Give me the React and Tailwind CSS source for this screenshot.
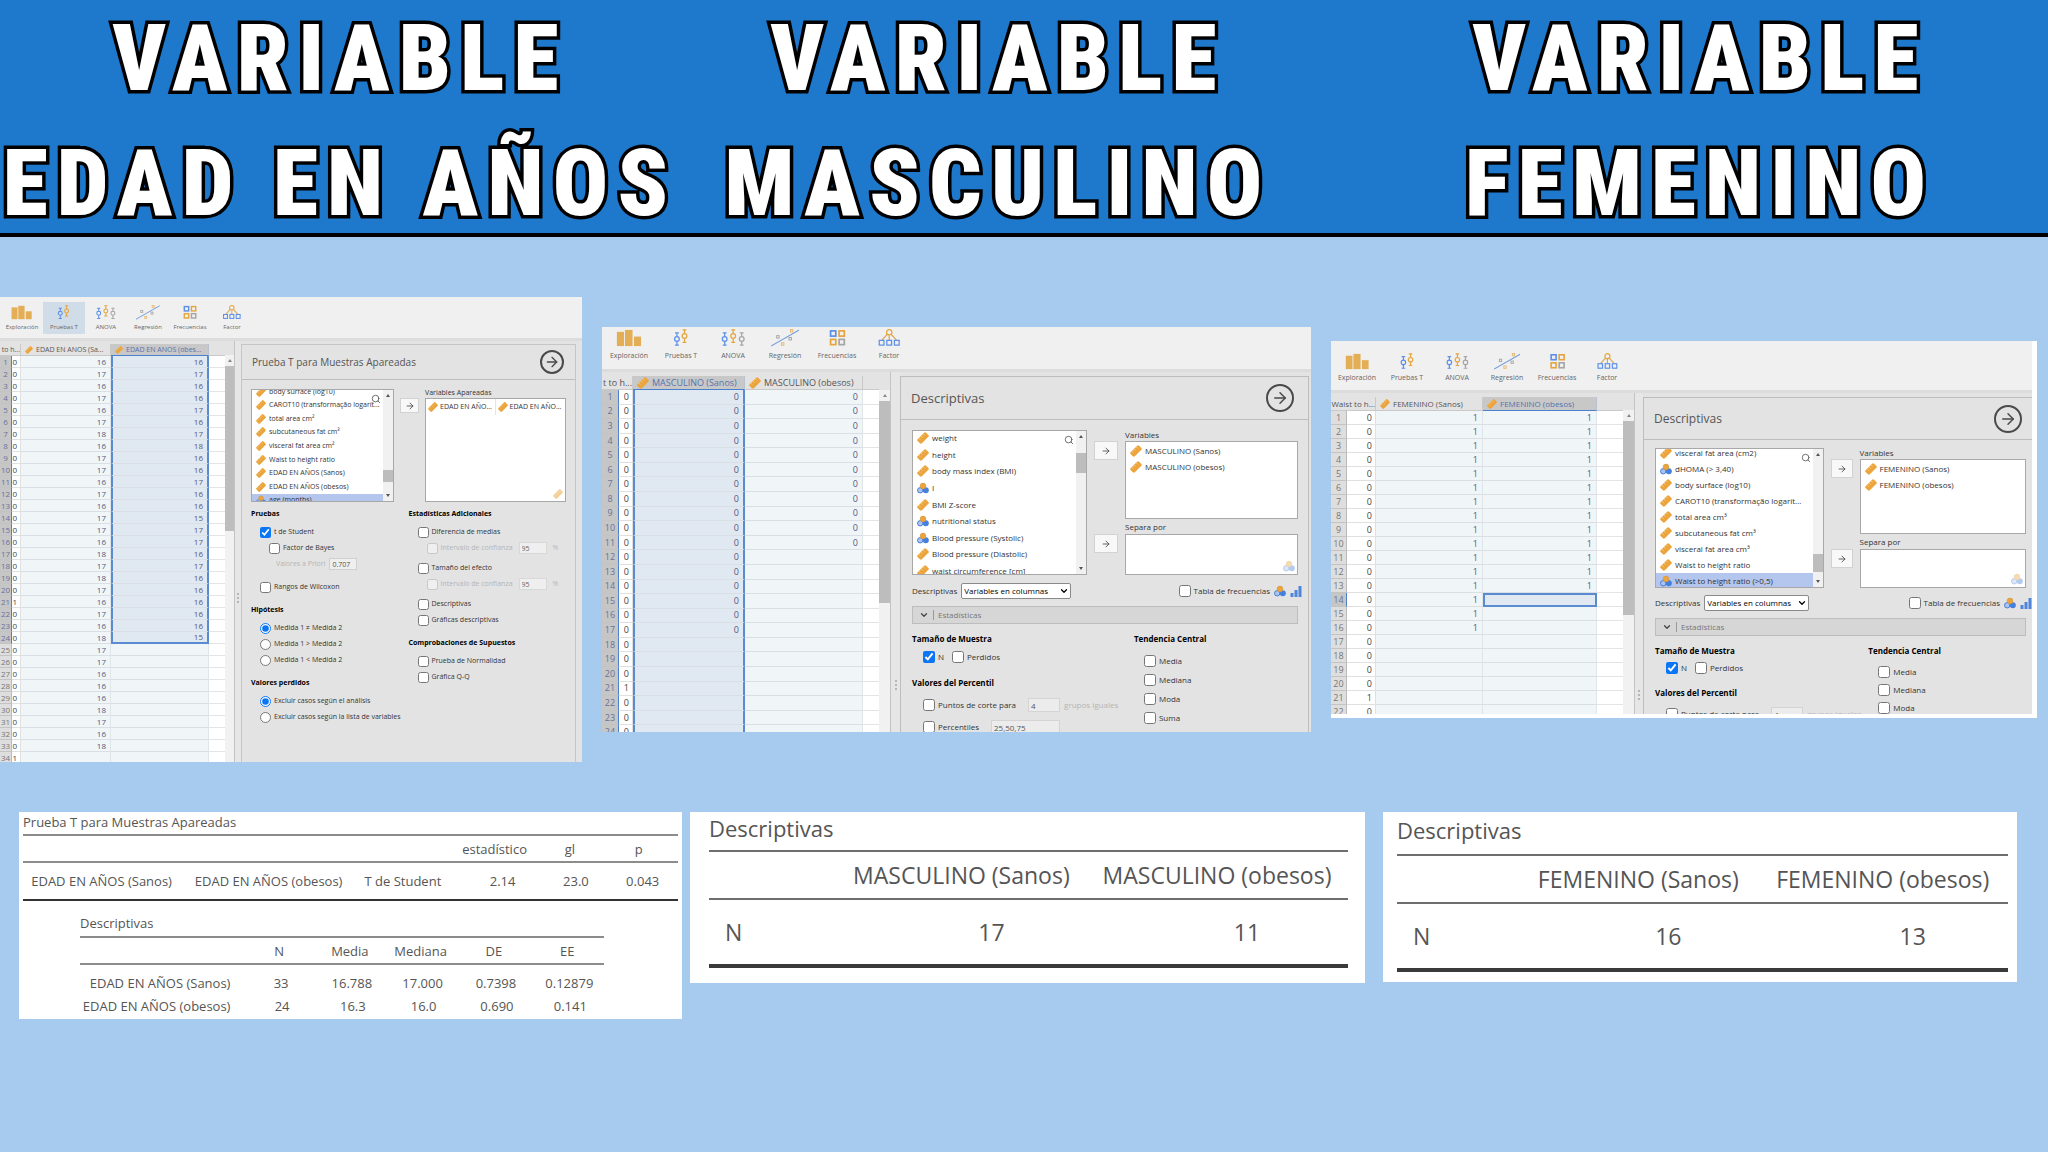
import clsx from 'clsx'
import { ArrowRight, ChevronDown, Search } from 'lucide-react'

/* ---------- icons ---------- */

function RulerIcon({ className }) {
  return (
    <svg viewBox="0 0 12 12" className={clsx('shrink-0', className)}>
      <g transform="rotate(-45 6 6)">
        <rect x="0" y="3" width="12" height="6" rx="1.4" fill="#eba53c" />
        <path d="M3 3v2.4M6 3v2.4M9 3v2.4" stroke="#f9d79b" strokeWidth="0.7" />
      </g>
    </svg>
  )
}

function NominalIcon({ className }) {
  return (
    <svg viewBox="0 0 12 12" className={clsx('shrink-0', className)}>
      <circle cx="3.2" cy="8.3" r="2.7" fill="#a9c4f0" stroke="#3f74d2" strokeWidth="0.9" />
      <circle cx="8.8" cy="8.3" r="3" fill="#4580dd" />
      <circle cx="6" cy="4" r="2.9" fill="#eba53c" stroke="#c98e3b" strokeWidth="0.5" />
    </svg>
  )
}

function OrdinalIcon({ className }) {
  return (
    <svg viewBox="0 0 12 12" className={clsx('shrink-0', className)}>
      <path d="M0.5 8h3v4h-3zM4.5 5h3v7h-3zM8.5 1h3v11h-3z" fill="#4f86dc" />
    </svg>
  )
}

const TOOL_ICONS = {
  exploration: (
    <g fill="#e3ae55">
      <rect x="2" y="3" width="7.5" height="15" />
      <rect x="10.5" y="1" width="8" height="17" />
      <rect x="20" y="8" width="7.5" height="10" />
    </g>
  ),
  ttest: (
    <g fill="none" strokeWidth="1.3">
      <path d="M8.5 4h4M10.5 4v4M8.5 17h4M10.5 17v-4" stroke="#5b8fe8" />
      <circle cx="10.5" cy="10.5" r="2.5" stroke="#5b8fe8" />
      <path d="M16.5 1h4M18.5 1v4M16.5 14h4M18.5 14v-4" stroke="#e5a53e" />
      <circle cx="18.5" cy="7.5" r="2.5" stroke="#e5a53e" />
    </g>
  ),
  anova: (
    <g fill="none" strokeWidth="1.3">
      <path d="M4 4h4M6 4v4M4 17h4M6 17v-4" stroke="#5b8fe8" />
      <circle cx="6" cy="10.5" r="2.5" stroke="#5b8fe8" />
      <path d="M13 1h4M15 1v4M13 14h4M15 14v-4" stroke="#e5a53e" />
      <circle cx="15" cy="7.5" r="2.5" stroke="#e5a53e" />
      <path d="M22 4h4M24 4v4M22 17h4M24 17v-4" stroke="#a5a5a5" />
      <circle cx="24" cy="10.5" r="2.5" stroke="#a5a5a5" />
    </g>
  ),
  regression: (
    <g fill="none" strokeWidth="1">
      <path d="M0 18L30 1" stroke="#6f9bdc" strokeWidth="1.2" />
      <rect x="6" y="7" width="2.6" height="2.6" stroke="#a5a5a5" />
      <rect x="20.5" y="0.6" width="2.6" height="2.6" stroke="#e5b76a" />
      <rect x="19" y="9" width="2.6" height="2.6" stroke="#a5a5a5" />
      <rect x="11" y="14.5" width="2.6" height="2.6" stroke="#e5b76a" />
    </g>
  ),
  frequencies: (
    <g fill="none" strokeWidth="1.8">
      <rect x="8" y="2" width="5.5" height="5.5" stroke="#5b8fe8" />
      <rect x="17" y="2" width="5.5" height="5.5" stroke="#e5a53e" />
      <rect x="8" y="11" width="5.5" height="5.5" stroke="#e5a53e" />
      <rect x="17" y="11" width="5.5" height="5.5" stroke="#a5a5a5" />
    </g>
  ),
  factor: (
    <g fill="none" strokeWidth="1.3">
      <path d="M13 5.500L7.500 11.500M15 6.500v5M17 5.500l5.500 6" stroke="#d9a95a" />
      <circle cx="15" cy="3.500" r="2.800" stroke="#e5a53e" />
      <rect x="4.500" y="12" width="5" height="5" stroke="#5b8fe8" />
      <rect x="12.500" y="12" width="5" height="5" stroke="#5b8fe8" />
      <rect x="20.500" y="12" width="5" height="5" stroke="#5b8fe8" />
    </g>
  ),
}

const TOOLS = [
  ['exploration', 'Exploración'],
  ['ttest', 'Pruebas T'],
  ['anova', 'ANOVA'],
  ['regression', 'Regresión'],
  ['frequencies', 'Frecuencias'],
  ['factor', 'Factor'],
]

/* ---------- data ---------- */

const AGE_SANOS = '16 17 16 17 16 17 18 16 17 17 16 17 16 17 17 16 18 17 18 17 16 17 16 18 17 17 16 16 16 18 17 16 18'.split(' ')
const AGE_OBESOS = '16 17 16 16 17 16 17 18 16 16 17 16 16 15 17 17 16 17 16 16 16 16 16 15'.split(' ')

const AGE_LIST = [
  ['scale', 'body surface (log10)'],
  ['scale', 'CAROT10 (transformação logarít...'],
  ['scale', 'total area cm²'],
  ['scale', 'subcutaneous fat cm³'],
  ['scale', 'visceral fat area cm²'],
  ['scale', 'Waist to height ratio'],
  ['scale', 'EDAD EN AÑOS (Sanos)'],
  ['scale', 'EDAD EN AÑOS (obesos)'],
  ['nominal', 'age (months)', true],
]

const MALE_LIST = [
  ['scale', 'weight'],
  ['scale', 'height'],
  ['scale', 'body mass index (BMI)'],
  ['nominal', 'I'],
  ['scale', 'BMI Z-score'],
  ['nominal', 'nutritional status'],
  ['nominal', 'Blood pressure (Systolic)'],
  ['scale', 'Blood pressure (Diastolic)'],
  ['scale', 'waist circumference [cm]'],
]

const FEMALE_LIST = [
  ['scale', 'visceral fat area (cm2)'],
  ['nominal', 'dHOMA (> 3,40)'],
  ['scale', 'body surface (log10)'],
  ['scale', 'CAROT10 (transformação logarít...'],
  ['scale', 'total area cm³'],
  ['scale', 'subcutaneous fat cm³'],
  ['scale', 'visceral fat area cm³'],
  ['scale', 'Waist to height ratio'],
  ['nominal', 'Waist to height ratio (>0,5)', true],
]

/* ---------- shared pieces ---------- */

function Toolbar({ active, className, itemClass, iconClass }) {
  return (
    <nav className={clsx('flex border-b-3 border-[#dcdcdc] bg-[#f0f0f0]', className)}>
      {TOOLS.map(([key, label]) => (
        <button
          key={key}
          className={clsx(
            'flex shrink-0 flex-col items-center text-[#666]',
            itemClass,
            active === key && 'bg-[#d0dce7]'
          )}
        >
          <svg viewBox="0 0 30 19" className={iconClass}>{TOOL_ICONS[key]}</svg>
          <span className="whitespace-nowrap">{label}</span>
        </button>
      ))}
    </nav>
  )
}

function ScrollTrack({ className, thumbClass }) {
  return (
    <div className={clsx('flex shrink-0 flex-col items-center bg-[#f1f1f1]', className)}>
      <span className="my-1 border-x-2 border-b-3 border-x-transparent border-b-[#888]" />
      <div className={clsx('w-full bg-[#bdbdbd]', thumbClass)} />
    </div>
  )
}

function Splitter({ className }) {
  return (
    <div className={clsx('flex shrink-0 flex-col items-center border-l border-[#c4c4c4] bg-[#e6e6e6]', className)}>
      <i className="mb-0.5 size-0.5 bg-[#b5b5b5]" />
      <i className="mb-0.5 size-0.5 bg-[#b5b5b5]" />
      <i className="size-0.5 bg-[#b5b5b5]" />
    </div>
  )
}

function Sheet({ cols, rows, corner, columns, rowClass, headClass, bodyClass, iconClass, tableClass, activeRows }) {
  return (
    <table className={clsx('w-full table-fixed border-separate border-spacing-0', tableClass)}>
      <colgroup>
        {cols.map((c, i) => <col key={i} className={c} />)}
      </colgroup>
      <thead>
        <tr className={headClass}>
          <th colSpan={2} className="border-r border-b border-[#c9c9c9] p-0 font-normal text-[#555]">
            <div className="flex justify-end overflow-hidden whitespace-nowrap">{corner}</div>
          </th>
          {columns.map((col) => (
            <th
              key={col.name}
              className={clsx(
                'border-r border-b p-0 pl-1 font-normal',
                col.selected ? 'border-[#b9c3d0] border-b-[#4a80cc] bg-[#c8c8c8] text-[#5573ad]' : 'border-[#c9c9c9] text-[#555]'
              )}
            >
              <div className="flex items-center gap-[3px] overflow-hidden whitespace-nowrap">
                <RulerIcon className={iconClass} />
                <span>{col.name}</span>
              </div>
            </th>
          ))}
          <th className="border-b border-[#c9c9c9] p-0" />
        </tr>
      </thead>
      <tbody className={bodyClass}>
        {Array.from({ length: rows }, (_, r) => (
          <tr key={r} className={rowClass}>
            <th
              className={clsx(
                'border-r border-b border-b-[#c3c3c3] p-0 text-center font-normal',
                r >= activeRows[0] && r < activeRows[1]
                  ? 'border-r-[#4a80cc] bg-[#c6c6c6] text-[#66739c]'
                  : 'border-r-[#bbb] bg-[#dedede] text-[#777]'
              )}
            >
              {r + 1}
            </th>
            <td className="border-r border-b border-[#e0e0e0] bg-white p-0 pr-[3px] text-right text-[#444]">
              {r === 20 || r === 33 ? 1 : 0}
            </td>
            {columns.map((col) => {
              const [from, to] = col.range || [0, 0]
              const inside = r >= from && r < to
              return (
                <td
                  key={col.name}
                  className={clsx(
                    'p-0 pr-1 text-right text-[#555a80]',
                    inside
                      ? 'border-x-2 border-x-[#5a8ad0] bg-[#e0e8f2]'
                      : 'border-r border-r-[#dfe5e8] bg-[#f0f5f7]',
                    inside && r === to - 1 ? 'border-b-2 border-b-[#5a8ad0]' : 'border-b border-b-[#d9dfe4]',
                    inside && to - from === 1 && 'border-t-2 border-t-[#5a8ad0]'
                  )}
                >
                  {col.values[r]}
                </td>
              )
            })}
            <td className="border-b border-[#e4e4e4] bg-white p-0" />
          </tr>
        ))}
      </tbody>
    </table>
  )
}

function PanelTitle({ title, className, buttonClass, arrowClass }) {
  return (
    <div className={clsx('flex items-center justify-between border-b border-[#bdbdbd] pl-2.5 text-[#555]', className)}>
      <h2>{title}</h2>
      <button
        aria-label="Ocultar opciones"
        className={clsx('flex items-center justify-center rounded-full border-2 border-[#4a4a4a] text-[#4a4a4a]', buttonClass)}
      >
        <ArrowRight className={arrowClass} strokeWidth={2} />
      </button>
    </div>
  )
}

function VarIcon({ type, className }) {
  return type === 'nominal' ? <NominalIcon className={className} /> : <RulerIcon className={className} />
}

function VariableList({ items, className, listClass, iconClass, thumbClass }) {
  return (
    <div className={clsx('relative flex min-w-0 flex-1 overflow-hidden border border-[#a8a8a8] bg-white', className)}>
      <ul className={clsx('flex min-w-0 flex-1 flex-col', listClass)}>
        {items.map(([type, name, selected]) => (
          <li
            key={name}
            className={clsx('flex min-h-0 flex-1 items-center gap-[3px] pl-1 whitespace-nowrap', selected && 'bg-[#b4c5ee]')}
          >
            <VarIcon type={type} className={iconClass} />
            {name}
          </li>
        ))}
      </ul>
      <button aria-label="Buscar" className="absolute top-1 right-3 text-[#555]">
        <Search className="size-2.5" />
      </button>
      <div className="flex w-2.5 shrink-0 flex-col items-center justify-between bg-[#f1f1f1]">
        <span className="mt-1 border-x-2 border-b-3 border-x-transparent border-b-[#555]" />
        <div className={clsx('w-full bg-[#bdbdbd]', thumbClass)} />
        <span className="mb-1 border-x-2 border-t-3 border-x-transparent border-t-[#555]" />
      </div>
    </div>
  )
}

function MoveButton({ className }) {
  return (
    <button
      aria-label="Asignar variable"
      className={clsx('flex items-center justify-center border border-[#d2d2d2] bg-[#f8f8f8] text-[#444]', className)}
    >
      <ArrowRight className="size-2.5" />
    </button>
  )
}

function Choice({ type = 'checkbox', name, label, checked, disabled, boxClass, className, children }) {
  return (
    <div className={clsx('flex items-center', className)}>
      <label className={clsx('flex items-center gap-[3px] whitespace-nowrap', disabled && 'text-[#b5b5b5]')}>
        <input
          type={type}
          name={name}
          defaultChecked={checked}
          disabled={disabled}
          className={clsx('m-0 shrink-0 accent-[#0b75f3]', boxClass)}
        />
        {label}
      </label>
      {children}
    </div>
  )
}

/* ---------- paired t test window ---------- */

function PairedTestWindow() {
  const box = 'size-[11px]'
  const row = 'h-4 pl-[9px]'
  const nested = 'h-4 pl-[18px]'
  const heading = 'h-[18px] leading-[16px] font-bold text-black'
  return (
    <section className="h-[465px] overflow-hidden bg-[#e3e3e3]">
      <Toolbar active="ttest" className="h-[44px] pt-[5px] pl-px text-[6px] leading-[8px]" itemClass="h-8 w-[42px] pt-[3px] gap-[3px]" iconClass="h-[15px]" />
      <div className="flex">
        <div className="flex w-[241px] shrink-0">
          <div className="flex-1 pt-[3px] text-[7px] leading-[8px]">
            <Sheet
              cols={['w-[12px]', 'w-[9px]', 'w-[90px]', 'w-[98px]', 'w-[16px]']}
              rows={34}
              corner="to h..."
              headClass="h-3"
              bodyClass="text-[8px]"
              rowClass="h-3"
              iconClass="size-2"
              activeRows={[0, 24]}
              columns={[
                { name: 'EDAD EN AÑOS (Sa...', values: AGE_SANOS },
                { name: 'EDAD EN AÑOS (obes...', values: AGE_OBESOS, selected: true, range: [0, 24] },
              ]}
            />
          </div>
          <ScrollTrack className="mt-[14px] w-[9px]" thumbClass="h-[165px]" />
          <Splitter className="w-[7px] pt-[252px]" />
        </div>

        <div className="mt-[3px] mr-[6px] min-w-0 flex-1 border border-[#c6c6c6] text-[7px] leading-[10px] text-[#333]">
          <PanelTitle title="Prueba T para Muestras Apareadas" className="h-[35px] pr-[11px] text-[10px]" buttonClass="size-6" arrowClass="size-4" />
          <div className="pt-[9px] pr-[9px] pl-[9px]">
            <div className="flex gap-1.5">
              <VariableList items={AGE_LIST} className="h-[113px]" listClass="-mt-[5px] h-[122px]" iconClass="size-2.5" thumbClass="mt-[60px] h-3" />
              <div className="pt-[9px]">
                <MoveButton className="h-[15px] w-[19px]" />
              </div>
              <div className="flex min-w-0 flex-1 flex-col">
                <h3 className="h-[9px] leading-[8px]">Variables Apareadas</h3>
                <div className="flex flex-1 flex-col justify-between border border-[#a8a8a8] bg-white">
                  <div className="grid grid-cols-2 whitespace-nowrap">
                    <span className="flex h-4 items-center gap-0.5 overflow-hidden border-r border-[#e4e4e4] pl-0.5">
                      <RulerIcon className="size-2.5" />EDAD EN AÑO...
                    </span>
                    <span className="flex h-4 items-center gap-0.5 overflow-hidden pl-0.5">
                      <RulerIcon className="size-2.5" />EDAD EN AÑO...
                    </span>
                  </div>
                  <RulerIcon className="m-0.5 size-2.5 self-end opacity-50" />
                </div>
              </div>
            </div>

            <div className="grid grid-cols-2 pt-1">
              <div>
                <h3 className={heading}>Pruebas</h3>
                <Choice className={row} boxClass={box} label="t de Student" checked />
                <Choice className={nested} boxClass={box} label="Factor de Bayes" />
                <label className="flex h-4 items-center gap-1 pl-[25px] text-[#b5b5b5]">
                  Valores a Priori
                  <input defaultValue="0.707" className="h-3 w-7 border border-[#d0d0d0] bg-[#efefef] px-0.5 text-[#555]" />
                </label>
                <Choice className="mt-[7px] h-4 pl-[9px]" boxClass={box} label="Rangos de Wilcoxon" />
                <h3 className={clsx('mt-[7px]', heading)}>Hipótesis</h3>
                <Choice type="radio" name="hyp" className={row} boxClass={box} label="Medida 1 ≠ Medida 2" checked />
                <Choice type="radio" name="hyp" className={row} boxClass={box} label="Medida 1 > Medida 2" />
                <Choice type="radio" name="hyp" className={row} boxClass={box} label="Medida 1 < Medida 2" />
                <h3 className={clsx('mt-[7px]', heading)}>Valores perdidos</h3>
                <Choice type="radio" name="miss" className={row} boxClass={box} label="Excluir casos según el análisis" checked />
                <Choice type="radio" name="miss" className={row} boxClass={box} label="Excluir casos según la lista de variables" />
              </div>
              <div>
                <h3 className={heading}>Estadísticas Adicionales</h3>
                {['Diferencia de medias', 'Tamaño del efecto'].map((label) => (
                  <div key={label} className="mb-1">
                    <Choice className={row} boxClass={box} label={label} />
                    <Choice className={clsx('gap-1.5 text-[#b5b5b5]', nested)} boxClass={box} label="Intervalo de confianza" disabled>
                      <input aria-label={`Confianza, ${label}`} defaultValue="95" className="h-3 w-7 border border-[#d8d8d8] bg-[#efefef] px-0.5 text-[#666]" />
                      %
                    </Choice>
                  </div>
                ))}
                <Choice className={row} boxClass={box} label="Descriptivas" />
                <Choice className={row} boxClass={box} label="Gráficas descriptivas" />
                <h3 className={clsx('mt-[7px]', heading)}>Comprobaciones de Supuestos</h3>
                <Choice className={row} boxClass={box} label="Prueba de Normalidad" />
                <Choice className={row} boxClass={box} label="Gráfica Q-Q" />
              </div>
            </div>
          </div>
        </div>
      </div>
    </section>
  )
}

/* ---------- descriptives options, shared by two windows ---------- */

function DescriptivesOptions({ items, listProps, variables, s }) {
  return (
    <div className={clsx('min-w-0 flex-1 border-t border-l border-[#bdbdbd] text-[8px] leading-[10px] text-[#333]', s.panel)}>
      <PanelTitle title="Descriptivas" className={s.title} buttonClass={s.round} arrowClass="size-[18px]" />
      <div className={clsx('pl-[11px]', s.body)}>
        <div className="flex gap-[7px]">
          <VariableList items={items} {...listProps} />
          <div className="flex flex-col pt-[11px]">
            <MoveButton className={s.move} />
            <MoveButton className={clsx(s.move, s.moveGap)} />
          </div>
          <div className="flex min-w-0 flex-1 flex-col">
            <h3 className="h-[11px] leading-[9px]">Variables</h3>
            <ul className={clsx('border border-[#a8a8a8] bg-white pt-px', s.target)}>
              {variables.map((name) => (
                <li key={name} className="flex h-4 items-center gap-[3px] pl-1 whitespace-nowrap">
                  <RulerIcon className="size-3" />
                  {name}
                </li>
              ))}
            </ul>
            <h3 className="h-[15px] leading-[16px]">Separa por</h3>
            <div className="flex flex-1 items-end justify-end border border-[#a8a8a8] bg-white p-0.5">
              <NominalIcon className="size-3 opacity-40" />
            </div>
          </div>
        </div>

        <div className={clsx('flex items-center justify-between', s.selectRow)}>
          <label className="flex items-center gap-1">
            Descriptivas
            <span className="relative flex items-center">
              <select className={clsx('h-4 appearance-none rounded-xs border border-[#8a8a8a] bg-white pl-0.5 text-black', s.select)}>
                <option>Variables en columnas</option>
              </select>
              <ChevronDown className="pointer-events-none absolute right-0.5 size-2.5 text-black" strokeWidth={3} />
            </span>
          </label>
          <Choice className="gap-1" boxClass="size-3" label="Tabla de frecuencias">
            <NominalIcon className="size-3" />
            <OrdinalIcon className="size-3" />
          </Choice>
        </div>

        <button className="flex h-[18px] w-full items-center gap-1 border border-[#bdbdbd] bg-[#d6d6d6] pl-1.5 text-[#777]">
          <ChevronDown className="size-2.5 text-[#444]" strokeWidth={3} />
          <span className="border-l border-[#999] pl-1">Estadísticas</span>
        </button>
        <div className="grid grid-cols-[23fr_17fr] pt-[7px]">
          <div>
            <h3 className="h-4 leading-[16px] font-bold text-black">Tamaño de Muestra</h3>
            <div className={clsx('flex items-center gap-2 pl-[11px]', s.row)}>
              <Choice boxClass="size-3" label="N" checked />
              <Choice boxClass="size-3" label="Perdidos" />
            </div>
            <h3 className="mt-2 mb-1 h-4 leading-[16px] font-bold text-black">Valores del Percentil</h3>
            <Choice className={clsx('mb-0.5 gap-3 pl-[11px]', s.row)} boxClass="size-3" label="Puntos de corte para">
              <span className="flex items-center gap-1 whitespace-nowrap text-[#b5b5b5]">
                <input aria-label="Número de grupos" defaultValue="4" className="h-3.5 w-8 border border-[#d4d4d4] bg-[#ececec] px-0.5 text-[#555]" />
                grupos iguales
              </span>
            </Choice>
            <Choice className={clsx('gap-3 pl-[11px]', s.row)} boxClass="size-3" label="Percentiles">
              <input aria-label="Lista de percentiles" defaultValue="25,50,75" className="h-3.5 w-[69px] border border-[#d4d4d4] bg-[#ececec] px-0.5 text-[#555]" />
            </Choice>
          </div>
          <div>
            <h3 className="mb-1 h-4 leading-[16px] font-bold text-black">Tendencia Central</h3>
            {['Media', 'Mediana', 'Moda', 'Suma'].map((label) => (
              <Choice key={label} className={clsx('pl-[10px]', s.central)} boxClass="size-3" label={label} />
            ))}
          </div>
        </div>
      </div>
    </div>
  )
}

function MaleWindow() {
  return (
    <section className="h-[405px] overflow-hidden bg-[#e3e3e3]">
      <Toolbar className="h-[45px] pt-[2px] pl-px text-[7px] leading-[10px]" itemClass="w-[52px] gap-[4px]" iconClass="h-[18px]" />
      <div className="flex">
        <div className="flex w-[298px] shrink-0">
          <div className="flex-1 pt-[4px] text-[9px] leading-[10px]">
            <Sheet
              cols={['w-[17px]', 'w-[14px]', 'w-[112px]', 'w-[118px]', 'w-[16px]']}
              rows={24}
              corner="t to h..."
              headClass="h-[14px]"
              rowClass=""
              tableClass="h-[364px]"
              iconClass="size-3"
              activeRows={[0, 24]}
              columns={[
                { name: 'MASCULINO (Sanos)', values: Array(17).fill(0), selected: true, range: [0, 25] },
                { name: 'MASCULINO (obesos)', values: Array(11).fill(0) },
              ]}
            />
          </div>
          <ScrollTrack className="mt-[18px] w-[11px]" thumbClass="h-[202px]" />
          <Splitter className="w-[10px] pt-[308px]" />
        </div>
        <DescriptivesOptions
          items={MALE_LIST}
          variables={['MASCULINO (Sanos)', 'MASCULINO (obesos)']}
          listProps={{ className: 'h-[145px]', listClass: '-mt-px h-[149px]', iconClass: 'size-3', thumbClass: '-mt-[80px] h-5' }}
          s={{
            panel: 'mt-[4px] mr-[2px] border-r',
            title: 'h-[43px] pr-[14px] text-[13px]',
            round: 'size-7',
            body: 'pt-[10px] pr-[10px]',
            move: 'h-[19px] w-6',
            moveGap: 'mt-[74px]',
            target: 'h-[78px]',
            selectRow: 'h-[31px] -mr-1',
            select: 'w-[110px]',
            row: 'h-5',
            central: 'h-[19px]',
          }}
        />
      </div>
    </section>
  )
}

function FemaleWindow() {
  return (
    <section className="h-[377px] overflow-hidden border-r-5 border-b-4 border-white bg-[#e3e3e3]">
      <Toolbar className="h-[52px] pt-[12px] pl-px text-[7px] leading-[10px]" itemClass="w-[50px] gap-[3px]" iconClass="h-[17px]" />
      <div className="flex">
        <div className="flex w-[312px] shrink-0">
          <div className="flex-1 pt-[4px] text-[8px] leading-[10px]">
            <Sheet
              cols={['w-[16px]', 'w-[29px]', 'w-[107px]', 'w-[114px]', 'w-[26px]']}
              rows={22}
              corner="Waist to h..."
              headClass="h-[14px]"
              bodyClass="text-[9px]"
              rowClass="h-[14px]"
              iconClass="size-2.5"
              activeRows={[13, 14]}
              columns={[
                { name: 'FEMENINO (Sanos)', values: Array(16).fill(1) },
                { name: 'FEMENINO (obesos)', values: Array(13).fill(1), selected: true, range: [13, 14] },
              ]}
            />
          </div>
          <ScrollTrack className="mt-[17px] w-[11px]" thumbClass="h-[194px]" />
          <Splitter className="w-[9px] pt-[297px]" />
        </div>
        <DescriptivesOptions
          items={FEMALE_LIST}
          variables={['FEMENINO (Sanos)', 'FEMENINO (obesos)']}
          listProps={{ className: 'h-[140px]', listClass: '-mt-1 h-[144px]', iconClass: 'size-3', thumbClass: 'mt-[90px] h-[18px]' }}
          s={{
            panel: 'mt-[4px]',
            title: 'h-[42px] pr-[10px] text-[12px]',
            round: 'size-7',
            body: 'pt-[8px] pr-[6px]',
            move: 'h-[19px] w-[22px]',
            moveGap: 'mt-[71px]',
            target: 'h-[75px]',
            selectRow: 'h-[30px] -mr-[6px]',
            select: 'w-[105px]',
            row: 'h-[18px]',
            central: 'h-[18px]',
          }}
        />
      </div>
    </section>
  )
}

/* ---------- result tables ---------- */

function PairedResults() {
  return (
    <section className="bg-white pr-1 pb-0.5 pl-1 text-[13px] leading-[16px] text-[#555]">
      <table className="w-full table-fixed border-collapse text-center whitespace-nowrap">
        <caption className="h-[22px] text-left leading-[20px]">Prueba T para Muestras Apareadas</caption>
        <colgroup>
          <col className="w-[24%]" />
          <col className="w-[27%]" />
          <col className="w-[14%]" />
          <col className="w-[14%]" />
          <col className="w-[9%]" />
          <col className="w-[12%]" />
        </colgroup>
        <thead>
          <tr className="h-[27px] border-y-2 border-[#8c8c8c]">
            <td colSpan={3} />
            <th className="p-0 font-normal">estadístico</th>
            <th className="p-0 font-normal">gl</th>
            <th className="p-0 font-normal">p</th>
          </tr>
        </thead>
        <tbody>
          <tr className="h-[38px] border-b-2 border-[#333]">
            <td className="p-0">EDAD EN AÑOS (Sanos)</td>
            <td className="p-0">EDAD EN AÑOS (obesos)</td>
            <td className="p-0">T de Student</td>
            <td className="p-0 pl-4">2.14</td>
            <td className="p-0 pl-3">23.0</td>
            <td className="p-0 pl-2">0.043</td>
          </tr>
        </tbody>
      </table>

      <table className="mt-[12px] ml-[57px] w-[80%] table-fixed border-collapse text-center whitespace-nowrap">
        <caption className="h-[23px] text-left leading-[20px]">Descriptivas</caption>
        <colgroup>
          <col className="w-[31%]" />
          <col className="w-[14%]" />
          <col className="w-[13%]" />
          <col className="w-[14%]" />
          <col className="w-[14%]" />
          <col className="w-[14%]" />
        </colgroup>
        <thead>
          <tr className="h-[27px] border-y-2 border-[#8c8c8c]">
            <td />
            {['N', 'Media', 'Mediana', 'DE', 'EE'].map((h) => (
              <th key={h} className="p-0 font-normal">{h}</th>
            ))}
          </tr>
        </thead>
        <tbody>
          <tr className="h-[30px]">
            <th className="p-0 pt-1.5 pr-3 text-right font-normal">EDAD EN AÑOS (Sanos)</th>
            {['33', '16.788', '17.000', '0.7398', '0.12879'].map((v) => (
              <td key={v} className="p-0 pt-1.5 pl-1">{v}</td>
            ))}
          </tr>
          <tr className="h-[23px]">
            <th className="p-0 pr-3 text-right font-normal">EDAD EN AÑOS (obesos)</th>
            {['24', '16.3', '16.0', '0.690', '0.141'].map((v) => (
              <td key={v} className="p-0 pl-1.5">{v}</td>
            ))}
          </tr>
        </tbody>
      </table>
    </section>
  )
}

function CountResults({ group, values, className, captionClass }) {
  return (
    <section className={clsx('bg-white text-[23px] leading-[24px] text-[#555]', className)}>
      <table className="w-full table-fixed border-collapse text-center whitespace-nowrap">
        <caption className={clsx('text-left text-[22px]', captionClass)}>Descriptivas</caption>
        <colgroup>
          <col className="w-[20%]" />
          <col className="w-[39%]" />
          <col className="w-[41%]" />
        </colgroup>
        <thead>
          <tr className="h-12 border-y-2 border-[#6e6e6e]">
            <td />
            <th className="p-0 font-normal">{group} (Sanos)</th>
            <th className="p-0 font-normal">{group} (obesos)</th>
          </tr>
        </thead>
        <tbody>
          <tr className="h-[67px] border-b-4 border-[#3a3a3a]">
            <th className="p-0 pl-4 text-left font-normal">N</th>
            <td className="p-0 pl-15">{values[0]}</td>
            <td className="p-0 pl-15">{values[1]}</td>
          </tr>
        </tbody>
      </table>
    </section>
  )
}

function Heading({ lines, className }) {
  return (
    <h1 className={clsx('text-center whitespace-nowrap', className)}>
      {lines.map((line) => (
        <span key={line} className="block">{line}</span>
      ))}
    </h1>
  )
}

export default function App() {
  return (
    <div className="min-h-screen bg-[#a7cbef] font-['Open_Sans','Noto_Sans',sans-serif]">
      <header className="h-[237px] overflow-hidden border-b-4 border-black bg-[#1e79cd]">
        <div className="-mt-1 grid grid-cols-[680fr_636fr_732fr] font-['Roboto_Condensed','Lato',sans-serif] text-[92px] leading-[125px] font-black tracking-widest text-white [-webkit-text-stroke:7px_black] [paint-order:stroke_fill]">
          <Heading lines={['VARIABLE', 'EDAD EN AÑOS']} />
          <Heading lines={['VARIABLE', 'MASCULINO']} />
          <Heading lines={['VARIABLE', 'FEMENINO']} className="pl-9" />
        </div>
      </header>

      <main>
        <div className="grid grid-cols-[582fr_709fr_706fr] items-center gap-5 pt-[60px] pr-[11px]">
          <PairedTestWindow />
          <MaleWindow />
          <FemaleWindow />
        </div>
        <div className="grid grid-cols-[663fr_675fr_644fr] items-start gap-2 pt-[50px] pr-[31px] pb-12 pl-[19px]">
          <PairedResults />
          <CountResults group="MASCULINO" values={[17, 11]} className="pr-[17px] pb-[15px] pl-[19px]" captionClass="pt-1 h-[38px]" />
          <CountResults group="FEMENINO" values={[16, 13]} className="ml-2.5 pr-[9px] pb-[10px] pl-[14px]" captionClass="pt-1.5 h-[42px]" />
        </div>
      </main>
    </div>
  )
}
